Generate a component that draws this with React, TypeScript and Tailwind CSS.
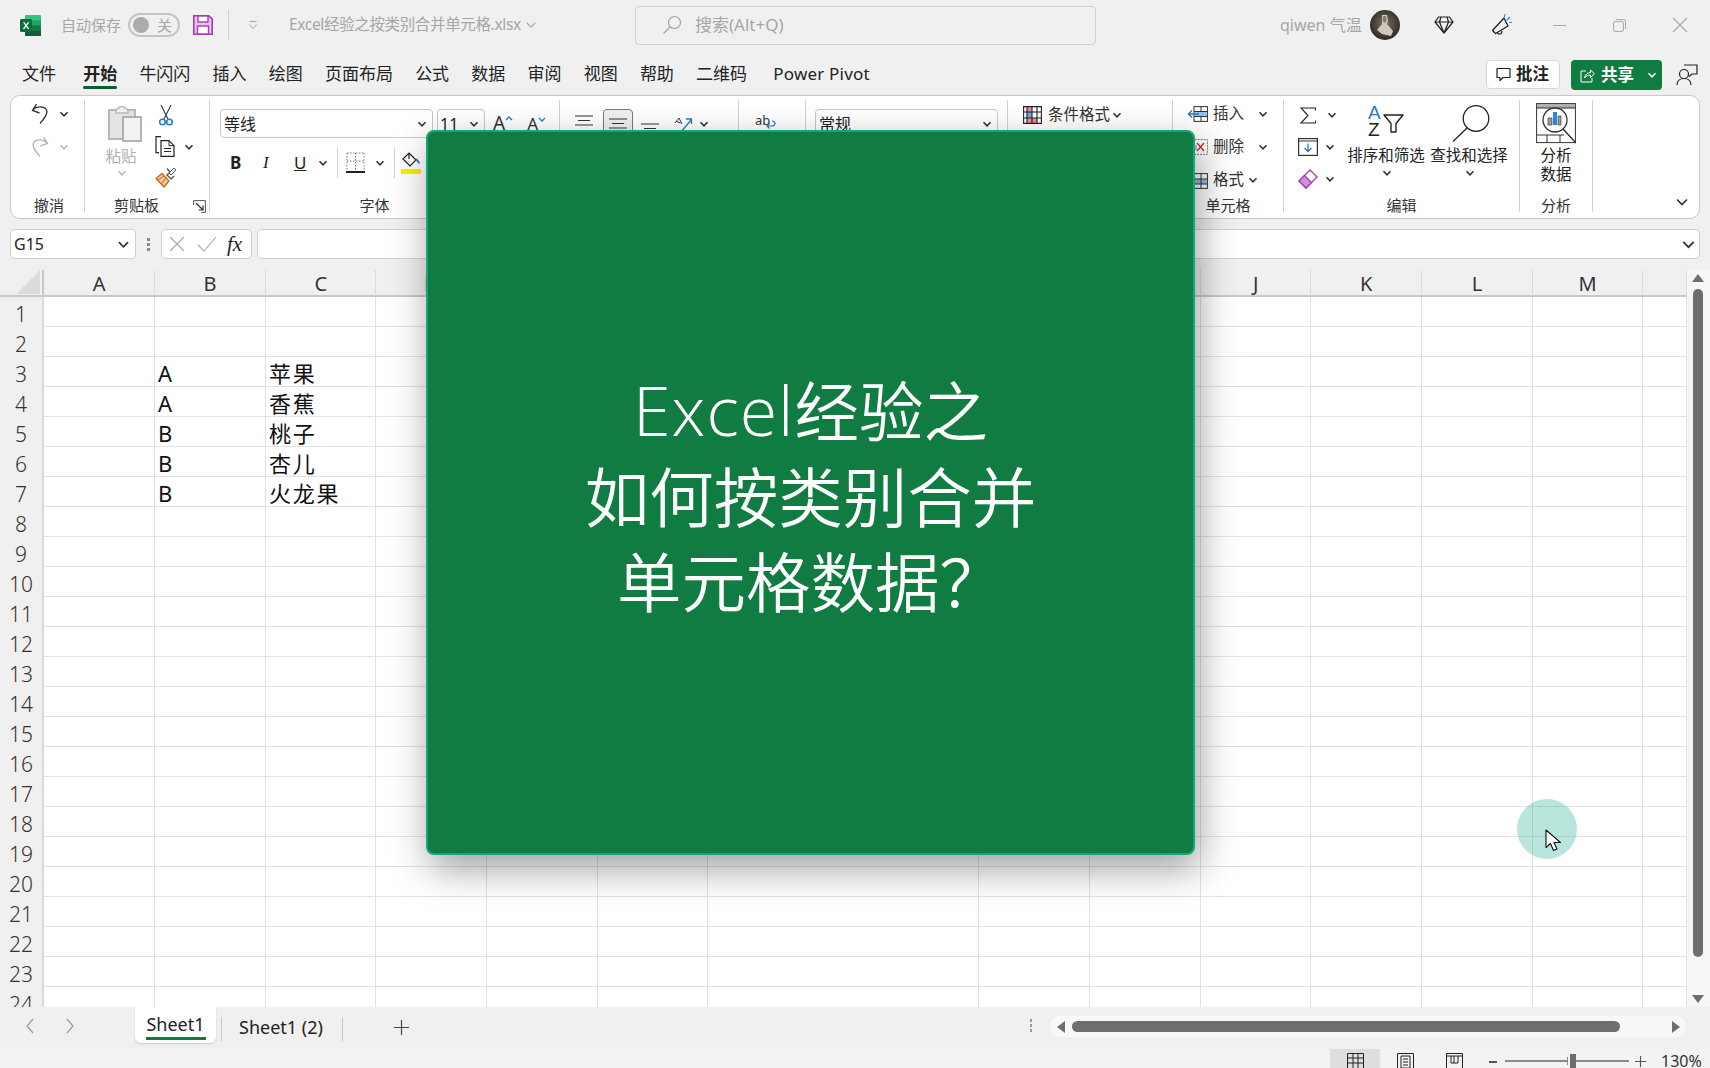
import type { ReactNode } from 'react'

const tabs = ['文件', '开始', '牛闪闪', '插入', '绘图', '页面布局', '公式', '数据', '审阅', '视图', '帮助', '二维码']
const columns = ['A', 'B', 'C', 'D', 'E', 'F', '', '', '', 'J', 'K', 'L', 'M', '']
const rows = Array.from({ length: 24 }, (_, i) => i + 1)
const cells: Record<string, string> = {
  '3-1': 'A',
  '3-2': '苹果',
  '4-1': 'A',
  '4-2': '香蕉',
  '5-1': 'B',
  '5-2': '桃子',
  '6-1': 'B',
  '6-2': '杏儿',
  '7-1': 'B',
  '7-2': '火龙果',
}

const gridClass =
  'grid grid-cols-[44px_110.5px_111px_110.5px_110.5px_111px_110px_271.5px_111px_110.6px_110.4px_110.6px_111px_110px_44px] grid-rows-[27px_repeat(24,30px)]'

function Chev({ size = 10, color = '#333', strokeWidth = 1.6 }: { size?: number; color?: string; strokeWidth?: number }) {
  return (
    <svg width={size} height={size} viewBox="0 0 10 10" fill="none" className="shrink-0">
      <path d="M1.5 3.2 5 6.8l3.5-3.6" stroke={color} strokeWidth={strokeWidth} />
    </svg>
  )
}

function Sep() {
  return <div className="w-px h-[112px] mt-[4px] bg-[#d2d2d2] shrink-0" />
}

function Group({ className, label, labelClass, children, extra }: { className: string; label: string; labelClass?: string; children: ReactNode; extra?: ReactNode }) {
  return (
    <div className={`${className} shrink-0 flex flex-col`}>
      <div className="h-[98px]">{children}</div>
      <div className="h-[22px] flex items-center text-[15px] leading-[22px] text-[#333]">
        <span className={labelClass ?? 'w-full text-center'}>{label}</span>
        {extra}
      </div>
    </div>
  )
}

function ExcelLogo() {
  return (
    <svg width="21" height="21" viewBox="0 0 21 21">
      <rect x="5" y="0" width="16" height="21" rx="1.5" fill="#21a366" />
      <rect x="5" y="0" width="16" height="5.5" rx="1.5" fill="#33c481" />
      <rect x="13" y="5.5" width="8" height="5" fill="#21a366" />
      <rect x="5" y="10.5" width="8" height="5" fill="#107c41" />
      <rect x="13" y="10.5" width="8" height="5" fill="#107c41" />
      <rect x="5" y="15.5" width="16" height="5.5" rx="1" fill="#185c37" />
      <rect x="0" y="4" width="12" height="13" rx="1.2" fill="#0f6d3a" />
      <path d="m3 7.2 2.2 3.4-2.4 3.4h1.7l1.6-2.4 1.5 2.4h1.8L7 10.6l2.2-3.4H7.6L6.1 9.4 4.7 7.2z" fill="#fff" />
    </svg>
  )
}

function SaveIcon() {
  return (
    <svg width="20" height="20" viewBox="0 0 20 20" fill="none">
      <path d="M.8.8h15l3.4 3.4v15H.8z" fill="#e6c4ec" stroke="#a53bb8" strokeWidth="1.6" />
      <rect x="5" y="1" width="10" height="6" fill="#fff" stroke="#a53bb8" strokeWidth="1.4" />
      <rect x="4.5" y="11" width="11" height="8" fill="#fff" stroke="#a53bb8" strokeWidth="1.4" />
    </svg>
  )
}

function Avatar() {
  return (
    <svg width="30" height="30" viewBox="0 0 30 30">
      <defs>
        <radialGradient id="av" cx="50%" cy="45%" r="55%">
          <stop offset="0%" stopColor="#7a7266" />
          <stop offset="100%" stopColor="#2c2a25" />
        </radialGradient>
      </defs>
      <circle cx="15" cy="15" r="15" fill="url(#av)" />
      <path d="M12 5h5l1 6-1 3 6 7-2 5-9-2-5-4 5-6z" fill="#cfc8bb" />
      <path d="M13 6h3l.6 5-2 2-2-2z" fill="#857d70" />
    </svg>
  )
}

function TitleBar() {
  return (
    <div className="h-[50px] flex items-center text-[#a6a6a6] shrink-0">
      <div className="ml-[20px]">
        <ExcelLogo />
      </div>
      <span className="ml-[20px] text-[15px]">自动保存</span>
      <div className="ml-[7px] w-[52px] h-[24px] rounded-full border-2 border-[#c4c4c4] flex items-center pl-[3px]">
        <div className="w-[16px] h-[16px] rounded-full bg-[#ababab]" />
        <span className="ml-[8px] text-[15px] leading-none">关</span>
      </div>
      <div className="ml-[13px]">
        <SaveIcon />
      </div>
      <div className="ml-[15px] w-px h-[30px] bg-[#d2d2d2]" />
      <svg width="10" height="10" viewBox="0 0 10 10" fill="none" className="ml-[19px]">
        <path d="M1.5 1.5h7M1.5 4.5 5 8.5l3.5-4" stroke="#a6a6a6" strokeWidth="1" />
      </svg>
      <span className="ml-[31px] w-[229px] whitespace-nowrap text-[15.5px] tracking-[-0.35px]">Excel经验之按类别合并单元格.xlsx</span>
      <div className="ml-[7px]">
        <Chev size={12} color="#a6a6a6" strokeWidth={1.1} />
      </div>
      <div className="ml-[98px] w-[461px] h-[39px] rounded-[4px] border border-[#cfcfcf] flex items-center">
        <svg width="20" height="20" viewBox="0 0 20 20" fill="none" className="ml-[26px]">
          <circle cx="12.5" cy="7.5" r="6" stroke="#a6a6a6" strokeWidth="1.2" />
          <path d="M8 12 1.5 18.5" stroke="#a6a6a6" strokeWidth="1.2" />
        </svg>
        <span className="ml-[13px] text-[17px]">搜索(Alt+Q)</span>
      </div>
      <span className="ml-[184px] w-[77px] text-[16px] whitespace-nowrap">qiwen 气温</span>
      <div className="ml-[13px]">
        <Avatar />
      </div>
      <svg width="20" height="18" viewBox="0 0 20 18" fill="none" className="ml-[34px]">
        <path d="M4.5 1h11L19 6l-9 11L1 6zM1 6h18M7 1 5.5 6 10 17l4.5-11L13 1" stroke="#222" strokeWidth="1.2" strokeLinejoin="round" />
      </svg>
      <svg width="22" height="22" viewBox="0 0 22 22" fill="none" className="ml-[37px]">
        <path d="M13 4 1.5 16.5l3 3L17 12z" stroke="#222" strokeWidth="1.3" strokeLinejoin="round" />
        <path d="M6 18.5c1 2 3.5 2 4.5.5l.5-2" stroke="#222" strokeWidth="1.3" />
        <path d="M16 6l3-3M18 8.5h3M13.5 3l.5-3" stroke="#2b88d8" strokeWidth="1.2" />
      </svg>
      <div className="ml-[40px] w-[13px] h-px bg-[#a6a6a6]" />
      <svg width="13" height="13" viewBox="0 0 13 13" fill="none" className="ml-[47px]">
        <rect x=".6" y="2.6" width="9.8" height="9.8" rx="1.5" stroke="#a6a6a6" />
        <path d="M3 .6h7.5a2 2 0 0 1 2 2V10" stroke="#a6a6a6" />
      </svg>
      <svg width="16" height="16" viewBox="0 0 16 16" fill="none" className="ml-[46px]">
        <path d="m1 1 14 14M15 1 1 15" stroke="#a6a6a6" strokeWidth="1.1" />
      </svg>
    </div>
  )
}

function TabRow() {
  return (
    <div className="h-[45px] flex shrink-0 text-[17px] text-[#222] pr-[12px]">
      <div className="flex gap-[22.2px] ml-[22px] pt-[11px]">
        {tabs.map((tab) => (
          <div key={tab} className={tab === '开始' ? 'relative h-[27px] leading-[25px] whitespace-nowrap ml-[5px]' : 'h-[27px] leading-[25px] whitespace-nowrap'}>
            <span className={tab === '开始' ? 'font-bold' : ''}>{tab}</span>
            {tab === '开始' && <div className="absolute left-0 right-0 top-[25px] h-[3px] bg-[#0e5c2f] rounded-sm" />}
          </div>
        ))}
        <div className="ml-[4px] h-[27px] leading-[25px] w-[97px] tracking-[0.2px] whitespace-nowrap">Power Pivot</div>
      </div>
      <div className="ml-auto flex items-start pt-[10px]">
        <div className="w-[74px] h-[29px] bg-white rounded-[4px] border border-[#d6d6d6] flex items-center pl-[9px]">
          <svg width="15" height="15" viewBox="0 0 15 15" fill="none">
            <path d="M1 1.5h13v9H7l-3 3v-3H1z" stroke="#222" strokeWidth="1.2" strokeLinejoin="round" />
          </svg>
          <span className="ml-[5px] text-[16.5px] font-bold leading-none">批注</span>
        </div>
        <div className="ml-[11px] w-[91px] h-[30px] bg-[#107c41] rounded-[4px] flex items-center pl-[9px] text-white">
          <svg width="15" height="15" viewBox="0 0 15 15" fill="none">
            <path d="M6 3H1v11h11v-4M4.5 10c.5-3.500 3-5.500 6-5.500V2l4 3.800-4 3.700V7c-2.500 0-4.500 1-6 3z" stroke="#fff" strokeWidth="1" strokeLinejoin="round" />
          </svg>
          <span className="ml-[6px] text-[16.5px] font-bold leading-none">共享</span>
          <div className="ml-[13px]">
            <Chev color="#fff" />
          </div>
        </div>
        <svg width="22" height="22" viewBox="0 0 22 22" fill="none" className="ml-[14px] mt-[4px]">
          <circle cx="8" cy="10" r="4.500" stroke="#222" strokeWidth="1.2" />
          <path d="M1 21c0-4 3-6.500 7-6.500s7 2.500 7 6.500" stroke="#222" strokeWidth="1.2" />
          <path d="M8 1h13v9h-5l-3 2.500" stroke="#222" strokeWidth="1.2" />
        </svg>
      </div>
    </div>
  )
}

function UndoIcon({ color, flip }: { color: string; flip?: boolean }) {
  return (
    <svg width="18" height="22" viewBox="0 0 18 22" fill="none" className={flip ? '-scale-x-100' : ''}>
      <path d="M5.500 1 1.500 7.500 8.500 10M1.500 7.500C5 3 13 2.500 15.500 7c2 4-3 9.500-6.500 13.500" stroke={color} strokeWidth="1.400" />
    </svg>
  )
}

function UndoGroup() {
  return (
    <Group className="w-[73px]" label="撤消" labelClass="w-full text-center pl-[3px]">
      <div className="pl-[20px] pt-[7px] flex flex-col gap-[11px]">
        <div className="flex items-center gap-[10px]">
          <UndoIcon color="#333" />
          <Chev />
        </div>
        <div className="flex items-center gap-[10px]">
          <UndoIcon color="#b4b4b4" flip />
          <Chev color="#bbb" />
        </div>
      </div>
    </Group>
  )
}

function ClipboardGroup() {
  return (
    <Group
      className="w-[124px]"
      label="剪贴板"
      labelClass="pl-[29px]"
      extra={
        <svg width="13" height="13" viewBox="0 0 13 13" fill="none" className="ml-auto mr-[3px] mt-[3px]">
          <path d="M.6 5V.6h11.800v11.800H8" stroke="#555" />
          <path d="m3 3 7 7M5.500 10H10V5.500" stroke="#333" strokeWidth="1.200" />
        </svg>
      }
    >
      <div className="flex">
        <div className="ml-[21px] w-[36px] flex flex-col items-center text-[#b0b0b0] pt-[8px]">
          <svg width="36" height="38" viewBox="0 0 36 38" fill="none">
            <path d="M3 6h26v29H3z" fill="#e4e4e4" stroke="#b8b8b8" strokeWidth="2" />
            <path d="M10 6c1-1 2-2 3-2 .5-2 5-2 6 0 1 0 2 1 3 2v3H10z" fill="#f0f0f0" stroke="#b8b8b8" strokeWidth="1.600" />
            <rect x="17" y="13" width="18" height="24" fill="#f2f2f2" stroke="#9c9c9c" strokeWidth="1.500" />
          </svg>
          <span className="text-[15.5px] leading-[20px] mt-[4px] mr-[6px] whitespace-nowrap">粘贴</span>
          <div className="mt-[2px] mr-[4px]">
            <Chev color="#b8b8b8" />
          </div>
        </div>
        <div className="ml-[13px] pt-[9px] flex flex-col items-start gap-[10px]">
          <svg width="16" height="21" viewBox="0 0 16 21" fill="none" className="ml-[3px]">
            <path d="M3 0 10 14M13 0 6 14" stroke="#333" strokeWidth="1.100" />
            <circle cx="4.500" cy="17" r="2.800" stroke="#2b79c2" strokeWidth="1.500" />
            <circle cx="11.500" cy="17" r="2.800" stroke="#2b79c2" strokeWidth="1.500" />
          </svg>
          <div className="flex items-center gap-[9px]">
            <svg width="20" height="21" viewBox="0 0 20 21" fill="none">
              <path d="M6 .7H1v16h3M6 4.700h8l5 5v10.600H6z" stroke="#222" strokeWidth="1.200" />
              <path d="M14 4.700v5h5M9 12.500h7M9 15.500h7" stroke="#222" strokeWidth="1" />
            </svg>
            <Chev />
          </div>
          <svg width="21" height="21" viewBox="0 0 21 21" fill="none">
            <path d="M12 1.500 15 5l-3 3 4 4 3-3" stroke="#555" strokeWidth="1.300" />
            <path d="M19 1l-5 5 2 2 5-5z" fill="#fff" stroke="#555" strokeWidth="1" />
            <path d="M7 6.500 14 14 9 20 1 11.500z" fill="#f7c99a" stroke="#c9691c" strokeWidth="1.300" />
            <path d="M3 13 9 9M6 17l5-6" stroke="#c9691c" />
          </svg>
        </div>
      </div>
    </Group>
  )
}

function FontGroup() {
  return (
    <Group className="w-[349px]" label="字体" labelClass="w-full text-center pr-[20px]">
      <div className="pl-[10px] pt-[13px]">
        <div className="flex items-center">
          <div className="w-[213px] h-[29px] rounded-[4px] border border-[#c6c6c6] flex items-center pl-[3px] pr-[5px] justify-between text-[16px] text-[#222]">
            等线
            <Chev />
          </div>
          <div className="ml-[4px] w-[48px] h-[29px] rounded-[4px] border border-[#c6c6c6] flex items-center pl-[2px] pr-[5px] justify-between text-[16px] text-[#222]">
            11
            <Chev />
          </div>
          <span className="ml-[8px] text-[19px] text-[#333] leading-none">A</span>
          <svg width="8" height="8" viewBox="0 0 8 8" fill="none" className="mb-[10px]">
            <path d="m1 5 3-3 3 3" stroke="#2b79c2" strokeWidth="1.300" />
          </svg>
          <span className="ml-[14px] text-[17px] text-[#333] leading-none">A</span>
          <svg width="8" height="8" viewBox="0 0 8 8" fill="none" className="mb-[10px]">
            <path d="m1 3 3 3 3-3" stroke="#2b79c2" strokeWidth="1.300" />
          </svg>
        </div>
        <div className="flex items-center mt-[10px] h-[30px] text-[17px] text-[#222]">
          <span className="ml-[10px] w-[32px] font-bold">B</span>
          <span className="w-[32px] pl-[1px] italic font-['Liberation_Serif',serif]">I</span>
          <span className="w-[24px] underline">U</span>
          <Chev />
          <div className="ml-[9px] w-px h-[30px] bg-[#d2d2d2]" />
          <svg width="19" height="22" viewBox="0 0 19 22" fill="none" className="ml-[8px]">
            <path d="M1 1h17M1 9h17M9.500 1v17M1 1v17M18 1v17" stroke="#777" strokeDasharray="1.500 1.500" />
            <path d="M0 20h19" stroke="#222" strokeWidth="2" />
          </svg>
          <div className="ml-[10px]">
            <Chev />
          </div>
          <div className="ml-[9px] w-px h-[30px] bg-[#d2d2d2]" />
          <svg width="20" height="22" viewBox="0 0 20 22" fill="none" className="ml-[6px]">
            <path d="m8 1 7 7-6 6-7-7zM8 1v6" stroke="#222" strokeWidth="1.200" />
            <path d="M15 7c2 2 3 3 3 4.500" stroke="#2b79c2" strokeWidth="1.800" />
            <rect x="0" y="17" width="20" height="5" fill="#ffee00" />
          </svg>
        </div>
      </div>
    </Group>
  )
}

function AlignLines({ y }: { y: 'top' | 'mid' | 'bottom' }) {
  const top = y === 'top' ? 1 : y === 'mid' ? 4 : 9
  return (
    <svg width="18" height="18" viewBox="0 0 18 18" fill="none">
      <path d={`M0 ${top}h18M3 ${top + 4.5}h12M0 ${top + 9}h18`} stroke="#333" strokeWidth="1.200" />
    </svg>
  )
}

function CoveredGroups() {
  return (
    <>
      <Group className="w-[178px]" label="">
        <div className="pl-[15px] pt-[13px] flex items-center">
          <AlignLines y="top" />
          <div className="ml-[10px] w-[30px] h-[29px] border border-[#7a7a7a] rounded-[4px] bg-[#f0f0f0] flex items-center justify-center">
            <AlignLines y="mid" />
          </div>
          <div className="ml-[8px]">
            <AlignLines y="bottom" />
          </div>
          <svg width="20" height="20" viewBox="0 0 20 20" fill="none" className="ml-[14px]">
            <path d="M2 9l4-5 3 6M3.500 7.500 7.500 9" stroke="#333" />
            <path d="M8 18 18 6M13 5h5.500v5" stroke="#2b79c2" strokeWidth="1.300" />
          </svg>
          <div className="ml-[6px]">
            <Chev />
          </div>
        </div>
      </Group>
      <Sep />
      <Group className="w-[66px]" label="">
        <div className="pl-[16px] pt-[15px] flex items-start">
          <div className="w-[18px] text-[13px] leading-[18px] text-[#333]">ab</div>
          <svg width="10" height="10" viewBox="0 0 10 10" fill="none" className="mt-[9px] -ml-[7px]">
            <path d="M6 1c4 0 4 5 0 5H1M3.500 3.500 1 6l2.500 2.500" stroke="#2b79c2" strokeWidth="1.200" />
          </svg>
        </div>
      </Group>
      <Sep />
      <Group className="w-[201px]" label="">
        <div className="pl-[9px] pt-[13px]">
          <div className="w-[183px] h-[29px] rounded-[4px] border border-[#c6c6c6] flex items-center pl-[3px] pr-[5px] justify-between text-[16px] text-[#222]">
            常规
            <Chev />
          </div>
        </div>
      </Group>
      <Sep />
      <Group className="w-[164px]" label="">
        <div className="pl-[15px] pt-[7px] flex items-center">
          <svg width="19" height="18" viewBox="0 0 19 18" fill="none">
            <rect x="4" y="1" width="5" height="5" fill="#f48a94" />
            <rect x="4" y="12" width="10" height="5" fill="#f48a94" />
            <rect x="4" y="6" width="5" height="6" fill="#2b88d8" opacity=".7" />
            <path d="M.6.600h17.800v16.800H.6zM.6 6h17.800M.6 12h17.800M4 .6v16.800M9 .6v16.800M14 .6v16.800" stroke="#222" strokeWidth="1.100" />
          </svg>
          <span className="ml-[6px] text-[15.5px] text-[#333] whitespace-nowrap w-[60px]">条件格式</span>
          <div className="ml-[4px]">
            <Chev />
          </div>
        </div>
      </Group>
    </>
  )
}

function CellButton({ icon, label, chevGap }: { icon: ReactNode; label: string; chevGap: string }) {
  return (
    <div className="flex items-center h-[20px]">
      {icon}
      <span className="ml-[5px] text-[15.5px] text-[#333] w-[31px] whitespace-nowrap">{label}</span>
      <div className={chevGap}>
        <Chev />
      </div>
    </div>
  )
}

function CellsGroup() {
  return (
    <Group className="w-[110px]" label="单元格">
      <div className="pl-[15px] pt-[8px] flex flex-col gap-[13px]">
        <CellButton
          chevGap="ml-[14px]"
          label="插入"
          icon={
            <svg width="20" height="16" viewBox="0 0 20 16" fill="none">
              <rect x="6" y=".6" width="13.400" height="14.800" fill="#fff" stroke="#333" />
              <path d="M13 .6v14.800M6 5.500h13.400M6 10.500h13.400" stroke="#333" />
              <rect x="7" y="6" width="12" height="4" fill="#8fc3ee" />
              <path d="M.5 8H11M4 4.500.5 8 4 11.500" stroke="#2b79c2" strokeWidth="1.300" />
            </svg>
          }
        />
        <CellButton
          chevGap="ml-[14px]"
          label="删除"
          icon={
            <svg width="20" height="16" viewBox="0 0 20 16" fill="none">
              <path d="M.6.600h18.800v14.800H.6z" stroke="#777" strokeDasharray="2 1" />
              <rect x="1" y="6" width="8" height="5" fill="#8fc3ee" />
              <path d="m9 4 7 8M16 4l-7 8" stroke="#d13438" strokeWidth="1.500" />
            </svg>
          }
        />
        <CellButton
          chevGap="ml-[4px]"
          label="格式"
          icon={
            <svg width="20" height="18" viewBox="0 0 20 18" fill="none">
              <rect x="6" y="2.600" width="13.400" height="14.800" fill="#fff" stroke="#333" />
              <rect x="7" y="8" width="12" height="5" fill="#8fc3ee" />
              <path d="M6 8h13.400M6 13h13.400M13 2.600v14.800" stroke="#333" />
            </svg>
          }
        />
      </div>
    </Group>
  )
}

function EditGroup() {
  return (
    <Group className="w-[235px]" label="编辑">
      <div className="flex">
        <div className="ml-[14px] w-[50px] pt-[10px] flex flex-col gap-[14px]">
          <div className="flex items-center h-[18px] pl-[2px]">
            <svg width="16" height="17" viewBox="0 0 16 17" fill="none">
              <path d="M15.500 3.500V1H1l7 7.500L1 16h14.500v-2.500" stroke="#222" strokeWidth="1.100" />
            </svg>
            <div className="ml-[11px]">
              <Chev />
            </div>
          </div>
          <div className="flex items-center h-[18px]">
            <svg width="20" height="18" viewBox="0 0 20 18" fill="none">
              <rect x=".6" y=".6" width="18.800" height="16.800" fill="#fff" stroke="#333" strokeWidth="1.200" />
              <path d="M1 3h18" stroke="#333" />
              <path d="M10 5.500v8M6.500 10l3.500 3.500 3.500-3.500" stroke="#2b79c2" strokeWidth="1.300" />
            </svg>
            <div className="ml-[7px]">
              <Chev />
            </div>
          </div>
          <div className="flex items-center h-[18px]">
            <svg width="20" height="20" viewBox="0 0 20 20" fill="none">
              <path d="M12 1 19 8 8 19 1 12z" fill="#fff" stroke="#a53bb8" strokeWidth="1.300" />
              <path d="M6.500 6.500 13.500 13.500 8 19 1 12z" fill="#d58ce0" stroke="#a53bb8" strokeWidth="1.300" />
            </svg>
            <div className="ml-[7px]">
              <Chev />
            </div>
          </div>
        </div>
        <div className="ml-[-1px] w-[78px] flex flex-col items-center pt-[10px]">
          <div className="flex h-[34px] items-start">
            <div className="w-[15px] flex flex-col text-[19px] leading-[24px] -mt-[5px] font-['Liberation_Sans',sans-serif]">
              <span className="text-[#2b79c2] h-[17px]">A</span>
              <span className="text-[#222] h-[17px]">Z</span>
            </div>
            <svg width="21" height="19" viewBox="0 0 21 19" fill="none" className="mt-[8px]">
              <path d="M1 1h19l-7 8.500V18H8V9.500z" stroke="#222" strokeWidth="1.400" strokeLinejoin="round" />
            </svg>
          </div>
          <span className="mt-[5px] text-[15.5px] leading-[20px] text-[#222] whitespace-nowrap">排序和筛选</span>
          <div className="mt-[3px] ml-[2px]">
            <Chev />
          </div>
        </div>
        <div className="ml-[6px] w-[76px] flex flex-col items-center pt-[9px]">
          <svg width="38" height="37" viewBox="0 0 38 37" fill="none" className="ml-[3px]">
            <circle cx="24" cy="13.500" r="12.800" stroke="#222" strokeWidth="1.300" />
            <path d="M15 23 1 36.500" stroke="#222" strokeWidth="1.300" />
          </svg>
          <span className="mt-[3px] text-[15.5px] leading-[20px] text-[#222] whitespace-nowrap">查找和选择</span>
          <div className="mt-[3px] ml-[2px]">
            <Chev />
          </div>
        </div>
      </div>
    </Group>
  )
}

function AnalyzeGroup() {
  return (
    <Group className="w-[72px]" label="分析">
      <div className="flex flex-col items-center pt-[7px] text-[15.5px] leading-[19px] text-[#222]">
        <svg width="40" height="41" viewBox="0 0 40 41" fill="none">
          <rect x=".6" y=".6" width="38.800" height="39" fill="#fff" stroke="#333" />
          <rect x="1" y="1" width="38" height="4" fill="#b0b0b0" />
          <path d="M1 5h38M1 32h27M11 32v8M24 32v8" stroke="#333" />
          <circle cx="19" cy="17" r="12" fill="#fff" stroke="#333" strokeWidth="1.300" />
          <rect x="12" y="15" width="4" height="7" fill="#9a9a9a" stroke="#333" strokeWidth=".6" />
          <rect x="17" y="9" width="4" height="13" fill="#2b88d8" />
          <rect x="22" y="13" width="3" height="9" fill="#9a9a9a" stroke="#333" strokeWidth=".6" />
          <path d="M27 26 40 40" stroke="#333" strokeWidth="1.500" />
        </svg>
        <span className="mt-[2px]">分析</span>
        <span>数据</span>
      </div>
    </Group>
  )
}

function Ribbon() {
  return (
    <div className="ml-[10px] w-[1690px] h-[124px] shrink-0 bg-white rounded-[10px] border border-[#c9c9c9] flex overflow-hidden">
      <UndoGroup />
      <Sep />
      <ClipboardGroup />
      <Sep />
      <FontGroup />
      <Sep />
      <CoveredGroups />
      <Sep />
      <CellsGroup />
      <Sep />
      <EditGroup />
      <Sep />
      <AnalyzeGroup />
      <Sep />
      <div className="flex-1 flex justify-end items-end pr-[10px] pb-[9px]">
        <Chev size={14} strokeWidth={1.200} />
      </div>
    </div>
  )
}

function FormulaBar() {
  return (
    <div className="h-[30px] mt-[10px] ml-[10px] w-[1690px] shrink-0 flex text-[#222]">
      <div className="w-[126px] bg-white rounded-[4px] border border-[#d2d2d2] flex items-center justify-between pl-[3px] pr-[5px] text-[16px]">
        G15
        <Chev size={13} strokeWidth={1.300} />
      </div>
      <div className="w-[25px] flex flex-col items-center justify-center gap-[2px]">
        <div className="w-[3px] h-[3px] bg-[#8a8a8a]" />
        <div className="w-[3px] h-[3px] bg-[#8a8a8a]" />
        <div className="w-[3px] h-[3px] bg-[#8a8a8a]" />
      </div>
      <div className="w-[91px] bg-white rounded-[4px] border border-[#d2d2d2] flex items-center pl-[7px]">
        <svg width="16" height="16" viewBox="0 0 16 16" fill="none">
          <path d="m1 1 14 14M15 1 1 15" stroke="#a8a8a8" strokeWidth="1.100" />
        </svg>
        <svg width="20" height="16" viewBox="0 0 20 16" fill="none" className="ml-[12px]">
          <path d="m1 9 6 6L19 1" stroke="#a8a8a8" strokeWidth="1.100" />
        </svg>
        <span className="ml-[10px] text-[21px] italic font-['Liberation_Serif',serif] leading-none">fx</span>
      </div>
      <div className="ml-[5px] flex-1 bg-white rounded-[4px] border border-[#d2d2d2] flex items-center justify-end pr-[3px]">
        <Chev size={15} strokeWidth={1.200} />
      </div>
    </div>
  )
}

function SheetGrid() {
  return (
    <div className="mt-[11px] h-[737px] shrink-0 flex overflow-hidden">
      <div className={`${gridClass} w-[1687px] shrink-0 bg-white h-max`}>
        <div className="bg-[#f0f0f0] border-b-2 border-r-2 border-[#c8c8c8] flex items-end justify-end pr-[2px] pb-[1px]">
          <div className="w-0 h-0 border-l-[24px] border-l-transparent border-b-[24px] border-b-[#dcdcdc]" />
        </div>
        {columns.map((col, i) => (
          <div key={i} className="bg-[#f0f0f0] border-b-2 border-b-[#c8c8c8] border-r border-r-[#dcdcdc] flex items-center justify-center pl-[1px] pt-[2px] text-[20px] text-[#333] leading-none">
            {col}
          </div>
        ))}
        {rows.map((row) => [
          <div key={`h${row}`} className="bg-[#f0f0f0] border-r-2 border-r-[#dadada] flex items-center justify-center pt-[4px] text-[21px] font-light text-[#333] leading-none">
            {row}
          </div>,
          ...columns.map((_, c) => (
            <div key={`${row}-${c}`} className="border-b border-r border-[#e2e2e2] flex items-center pl-[3.500px] pt-[3px] text-[22px] tracking-[1.800px] text-[#111] leading-none whitespace-nowrap">
              {cells[`${row}-${c}`]}
            </div>
          )),
        ])}
      </div>
      <div className="flex-1 bg-[#f6f6f6] flex justify-start pl-[5px]">
        <div className="w-[12px] flex flex-col items-center pt-[4px] mr-[1px]">
          <div className="w-0 h-0 border-l-[6px] border-l-transparent border-r-[6px] border-r-transparent border-b-[8px] border-b-[#6e6e6e]" />
          <div className="mt-[7px] w-[10px] h-[668px] rounded-full bg-[#6e6e6e]" />
          <div className="mt-[38px] w-0 h-0 border-l-[6px] border-l-transparent border-r-[6px] border-r-transparent border-t-[8px] border-t-[#6e6e6e]" />
        </div>
      </div>
    </div>
  )
}

function SheetTabs() {
  return (
    <div className="h-[40px] shrink-0 bg-[#f0f0f0] flex items-start text-[18px] text-[#222]">
      <svg width="10" height="16" viewBox="0 0 10 16" fill="none" className="ml-[25px] mt-[11px]">
        <path d="M8 1 2 8l6 7" stroke="#9a9a9a" strokeWidth="1.200" />
      </svg>
      <svg width="10" height="16" viewBox="0 0 10 16" fill="none" className="ml-[30px] mt-[11px]">
        <path d="m2 1 6 7-6 7" stroke="#9a9a9a" strokeWidth="1.200" />
      </svg>
      <div className="ml-[60px] w-[81px] h-[36px] bg-white rounded-b-[6px] shadow-[0_1px_2px_rgba(0,0,0,0.15)] flex flex-col items-center">
        <span className="leading-[34px] h-[30px]">Sheet1</span>
        <div className="w-[60px] h-[3px] bg-[#107c41]" />
      </div>
      <div className="ml-[5px] mt-[10px] w-px h-[24px] bg-[#c8c8c8]" />
      <span className="ml-[17px] w-[103px] leading-[41px] whitespace-nowrap">Sheet1 (2)</span>
      <div className="mt-[10px] w-px h-[24px] bg-[#c8c8c8]" />
      <svg width="15" height="15" viewBox="0 0 15 15" fill="none" className="ml-[51px] mt-[13px]">
        <path d="M7.500 0v15M0 7.500h15" stroke="#444" strokeWidth="1.200" />
      </svg>
      <div className="ml-[621px] mt-[12px] flex flex-col gap-[2px]">
        <div className="w-[2px] h-[3px] bg-[#9a9a9a]" />
        <div className="w-[2px] h-[3px] bg-[#9a9a9a]" />
        <div className="w-[2px] h-[3px] bg-[#9a9a9a]" />
      </div>
      <div className="ml-[18px] mt-[9px] w-[636px] h-[21px] bg-[#f8f8f8] rounded-full flex items-center pl-[7px]">
        <div className="w-0 h-0 border-t-[6px] border-t-transparent border-b-[6px] border-b-transparent border-r-[8px] border-r-[#6e6e6e]" />
        <div className="ml-[7px] w-[548px] h-[11px] rounded-full bg-[#6e6e6e]" />
        <div className="ml-[52px] w-0 h-0 border-t-[6px] border-t-transparent border-b-[6px] border-b-transparent border-l-[8px] border-l-[#6e6e6e]" />
      </div>
    </div>
  )
}

function StatusBar() {
  return (
    <div className="mt-[2px] h-[19px] shrink-0 bg-[#f3f3f3] flex items-start overflow-hidden text-[#333]">
      <div className="ml-[1330px] w-[50px] h-[19px] bg-[#dedede] flex justify-center pt-[4px]">
        <svg width="17" height="16" viewBox="0 0 17 16" fill="none">
          <path d="M.5 .5h16v15H.5zM.5 5h16M.5 10h16M6 .5v15M11 .5v15" stroke="#222" />
        </svg>
      </div>
      <svg width="17" height="16" viewBox="0 0 17 16" fill="none" className="ml-[17px] mt-[4px]">
        <path d="M.5 .5h16v15H.5z" stroke="#222" />
        <path d="M4 3h9v12H4zM6 6h5M6 9h5M6 12h5" stroke="#222" />
      </svg>
      <svg width="17" height="16" viewBox="0 0 17 16" fill="none" className="ml-[32px] mt-[4px]">
        <path d="M.5 .5h16v15H.5zM.5 3h16M5 3v7h3V3M8 10h4V3" stroke="#222" />
      </svg>
      <div className="ml-[26px] mt-[12px] w-[8px] h-[1.500px] bg-[#555]" />
      <div className="ml-[8px] mt-[5px] w-[124px] h-[14px] flex items-center">
        <div className="w-[62px] h-[2px] bg-[#8a8a8a]" />
        <div className="w-px h-[8px] bg-[#8a8a8a]" />
        <div className="ml-[2px] w-[6px] h-[14px] bg-[#6e6e6e]" />
        <div className="flex-1 h-[2px] bg-[#8a8a8a]" />
      </div>
      <svg width="11" height="11" viewBox="0 0 11 11" fill="none" className="ml-[6px] mt-[7px]">
        <path d="M5.500 0v11M0 5.500h11" stroke="#555" strokeWidth="1.100" />
      </svg>
      <span className="ml-[15px] text-[16px] leading-[25px] whitespace-nowrap">130%</span>
    </div>
  )
}

export default function App() {
  return (
    <div className="relative w-[1710px] h-[1068px] overflow-hidden bg-[#f0f0f0] flex flex-col font-['Noto_Sans','Noto_Sans_CJK_SC',sans-serif]">
      <TitleBar />
      <TabRow />
      <Ribbon />
      <FormulaBar />
      <SheetGrid />
      <SheetTabs />
      <StatusBar />

      <div className="absolute left-[426px] top-[130px] w-[769px] h-[725px] rounded-[8px] bg-[#107c41] border-2 border-[#17a57c] shadow-[4px_14px_38px_rgba(0,0,0,0.38)] flex flex-col items-center justify-center pt-[8px] text-white text-[64.5px] leading-[85.5px] font-[350] whitespace-nowrap font-['Open_Sans','Noto_Sans_CJK_SC',sans-serif]">
        <div>
          <span className="text-[68px] tracking-[1px] font-[340]">Excel</span>经验之
        </div>
        <div>如何按类别合并</div>
        <div>单元格数据？</div>
      </div>

      <div className="absolute left-[1517px] top-[799px] w-[60px] h-[60px] rounded-full bg-[#13a98a]/30" />
      <svg width="18" height="24" viewBox="0 0 18 24" className="absolute left-[1545px] top-[829px]">
        <path d="M1 1v17.500l4.500-4 3 7 3.500-1.500-3-6.500h6.500z" fill="#fff" stroke="#111" strokeWidth="1.100" strokeLinejoin="round" />
      </svg>
    </div>
  )
}
